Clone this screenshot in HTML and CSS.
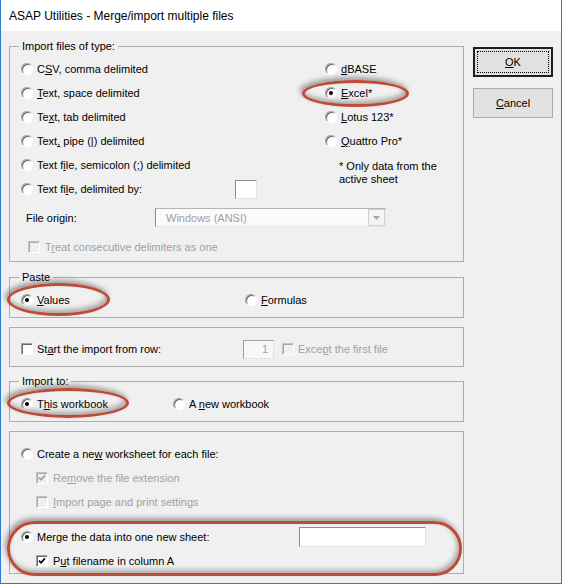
FILE: index.html
```html
<!DOCTYPE html>
<html>
<head>
<meta charset="utf-8">
<link rel="stylesheet" href="styles.css">
</head>
<body>
<div class="window">
  <div class="titlebar">ASAP Utilities - Merge/import multiple files</div>
  <div class="body">
    <div class="main">
      <div class="group g1">
        <div class="legend">Import files of type:</div>
        <div class="types">
          <div class="col left">
            <div class="row"><span class="radio"></span><span>C<u>S</u>V, comma delimited</span></div>
            <div class="row"><span class="radio"></span><span><u>T</u>ext, space delimited</span></div>
            <div class="row"><span class="radio"></span><span>Te<u>x</u>t, tab delimited</span></div>
            <div class="row"><span class="radio"></span><span>Text<u>,</u> pipe (|) delimited</span></div>
            <div class="row"><span class="radio"></span><span>Text f<u>i</u>le, semicolon (;) delimited</span></div>
            <div class="row"><span class="radio"></span><span>Text fi<u>l</u>e, delimited by:</span><span class="tbox small"></span></div>
          </div>
          <div class="col right">
            <div class="row"><span class="radio"></span><span><u>d</u>BASE</span></div>
            <div class="row"><span class="radio on"></span><span><u>E</u>xcel*</span></div>
            <div class="row"><span class="radio"></span><span><u>L</u>otus 123*</span></div>
            <div class="row"><span class="radio"></span><span><u>Q</u>uattro Pro*</span></div>
            <div class="note">* Only data from the<br>active sheet</div>
          </div>
        </div>
        <div class="origin">
          <span class="origin-label">File origin:</span>
          <div class="combo">
            <span class="combo-text">Windows (ANSI)</span>
            <span class="combo-btn"><svg width="7" height="4" viewBox="0 0 7 4"><path d="M0 0h7L3.5 4z" fill="#a8a8a8"/></svg></span>
          </div>
        </div>
        <div class="cbrow dis">
          <span class="check dis"></span><span>T<u>r</u>eat consecutive delimiters as one</span>
        </div>
      </div>

      <div class="group g2">
        <div class="legend">Paste</div>
        <div class="line">
          <div class="opt w224"><span class="radio on"></span><span><u>V</u>alues</span></div>
          <div class="opt"><span class="radio"></span><span><u>F</u>ormulas</span></div>
        </div>
      </div>

      <div class="group g3">
        <div class="line tall">
          <div class="opt ck w222"><span class="check"></span><span>St<u>a</u>rt the import from row:</span></div>
          <div class="spin">1</div>
          <div class="opt ck dis except"><span class="check dis"></span><span>Exce<u>p</u>t the first file</span></div>
        </div>
      </div>

      <div class="group g4">
        <div class="legend">Import to:</div>
        <div class="line">
          <div class="opt w152"><span class="radio on"></span><span>T<u>h</u>is workbook</span></div>
          <div class="opt"><span class="radio"></span><span>A <u>n</u>ew workbook</span></div>
        </div>
      </div>

      <div class="group g5">
        <div class="row"><span class="radio"></span><span>Create a ne<u>w</u> worksheet for each file:</span></div>
        <div class="row sub dis"><span class="check dis"><svg width="8" height="8" viewBox="0 0 8 8"><path d="M1 3.6 L3 5.8 L7 1.4" stroke="#a0a0a0" stroke-width="1.7" fill="none"/></svg></span><span>Re<u>m</u>ove the file extension</span></div>
        <div class="row sub dis"><span class="check dis"></span><span><u>I</u>mport page and print settings</span></div>
        <div class="row merge">
          <div class="opt w274"><span class="radio on"></span><span>Mer<u>g</u>e the data into one new sheet:</span></div>
          <span class="tbox wide"></span>
        </div>
        <div class="row sub"><span class="check"><svg width="8" height="8" viewBox="0 0 8 8"><path d="M1 3.6 L3 5.8 L7 1.4" stroke="#000" stroke-width="1.7" fill="none"/></svg></span><span>P<u>u</u>t filename in column A</span></div>
      </div>
    </div>

    <div class="buttons">
      <div class="btn default"><span class="focus"><u>O</u>K</span></div>
      <div class="btn"><span><u>C</u>ancel</span></div>
    </div>
  </div>

  <div class="mark m-excel"></div>
  <div class="mark m-values"></div>
  <div class="mark m-this"></div>
  <div class="mark m-merge"></div>
</div>
</body>
</html>
```

FILE: styles.css
```css
* { box-sizing: border-box; }
html, body { margin: 0; padding: 0; }
body {
  font-family: "Liberation Sans", Arial, sans-serif;
  font-size: 11px;
  color: #000;
  background: #fff;
}
u { text-decoration: underline; text-underline-offset: 1px; }

.window {
  position: relative;
  width: 562px;
  height: 584px;
  border: 1px solid #2b7bd0;
  border-top: none;
  background: #f0f0f0;
  display: flex;
  flex-direction: column;
  overflow: hidden;
}
.titlebar {
  flex: none;
  height: 31px;
  background: #fff;
  padding-left: 8px;
  font-size: 12px;
  line-height: 33px;
  color: #000;
}
.body {
  flex: 1;
  display: flex;
  padding: 0 8px;
  gap: 9px;
}
.main {
  width: 455px;
  display: flex;
  flex-direction: column;
}

.group {
  border: 1px solid #adadad;
  padding-left: 11px;
}
.legend {
  width: max-content;
  height: 14px;
  line-height: 14px;
  margin: -8px 0 0 -2px;
  padding: 0 3px;
  background: #f0f0f0;
}

.g1 { margin-top: 15px; padding-bottom: 7px; }
.g2 { margin-top: 15px; padding-bottom: 9px; }
.g3 { margin-top: 9px; padding-top: 11px; padding-bottom: 7px; }
.g4 { margin-top: 14px; padding-bottom: 9px; }
.g5 { margin-top: 9px; padding-top: 10px; }

.types { display: flex; margin-top: 4px; }
.col.left { width: 236px; }
.col.right { margin-left: 68px; }
.row {
  display: flex;
  align-items: center;
  height: 24px;
  gap: 4px;
}
.note {
  margin-top: 7px;
  padding-left: 14px;
  line-height: 13px;
}
.origin {
  display: flex;
  align-items: center;
  height: 19px;
  margin-top: 7px;
}
.origin-label { width: 134px; padding-left: 5px; }
.combo {
  width: 231px;
  height: 19px;
  display: flex;
  align-items: center;
  justify-content: space-between;
  background: #fbfbfb;
  border: 1px solid;
  border-color: #b4b4b4 #e6e6e6 #e6e6e6 #8a8a8a;
  padding: 0 0 0 10px;
}
.combo-text { color: #a0a0a0; }
.combo-btn {
  width: 17px;
  height: 17px;
  display: flex;
  align-items: center;
  justify-content: center;
  border: 1px solid #d2d2d2;
  background: #f4f4f4;
}
.cbrow {
  display: flex;
  align-items: center;
  height: 14px;
  margin-top: 13px;
  padding-left: 7px;
  gap: 5px;
}
.dis { color: #a0a0a0; }

.line { display: flex; align-items: center; height: 16px; margin-top: 8px; }
.line.tall { height: 20px; margin-top: 0; }
.opt { display: flex; align-items: center; gap: 4px; }
.w224 { width: 224px; }
.w222 { width: 222px; }
.w152 { width: 152px; }
.w274 { width: 274px; }
.except { margin-left: 8px; }

.sub { padding-left: 15px; gap: 5px; }
.merge { margin-top: 11px; }

.radio {
  flex: none;
  width: 12px;
  height: 12px;
  border-radius: 50%;
  background: #fff;
  border: 1px solid;
  border-color: #a0a0a0 #ffffff #ffffff #a0a0a0;
  box-shadow: inset 1px 1px 0 #696969;
  display: flex;
  align-items: center;
  justify-content: center;
}
.radio.on::after {
  content: "";
  width: 4px;
  height: 4px;
  border-radius: 50%;
  background: #000;
}
.check {
  flex: none;
  width: 12px;
  height: 12px;
  background: #fff;
  border: 1px solid;
  border-color: #a0a0a0 #ffffff #ffffff #a0a0a0;
  box-shadow: inset 1px 1px 0 #696969;
  display: flex;
  align-items: center;
  justify-content: center;
}
.check.dis {
  background: #f0f0f0;
  border-color: #c4c4c4 #ffffff #ffffff #c4c4c4;
  box-shadow: inset 1px 1px 0 #a8a8a8;
}

.tbox {
  flex: none;
  background: #fff;
  border: 1px solid;
  border-color: #8c8c8c #e3e3e3 #e3e3e3 #8c8c8c;
}
.tbox.small { width: 22px; height: 19px; margin-left: auto; }
.tbox.wide { width: 127px; height: 20px; }
.spin {
  width: 31px;
  height: 19px;
  background: #f8f8f8;
  border: 1px solid;
  border-color: #a0a0a0 #e3e3e3 #e3e3e3 #a0a0a0;
  color: #a0a0a0;
  text-align: right;
  padding-right: 5px;
  line-height: 17px;
}

.buttons {
  width: 80px;
  padding-top: 16px;
  display: flex;
  flex-direction: column;
  gap: 11px;
}
.btn {
  height: 30px;
  background: #e1e1e1;
  border: 1px solid #adadad;
  display: flex;
  align-items: center;
  justify-content: center;
}
.btn.default {
  border: 2px solid #1e1e1e;
  padding: 2px;
}
.focus {
  width: 100%;
  height: 100%;
  border: 1px dotted #000;
  display: flex;
  align-items: center;
  justify-content: center;
}

.mark {
  position: absolute;
  border: 3px solid #bd4b36;
  border-radius: 50%;
  box-shadow: -2px -3px 5px rgba(0, 0, 0, 0.35), inset -2px -3px 5px rgba(0, 0, 0, 0.3);
}
.m-excel { left: 301px; top: 80px; width: 107px; height: 27px; }
.m-values { left: 6px; top: 283px; width: 103px; height: 33px; }
.m-this { left: 6px; top: 388px; width: 122px; height: 30px; }
.m-merge { left: 6px; top: 521px; width: 455px; height: 55px; border-radius: 28px; }
```
